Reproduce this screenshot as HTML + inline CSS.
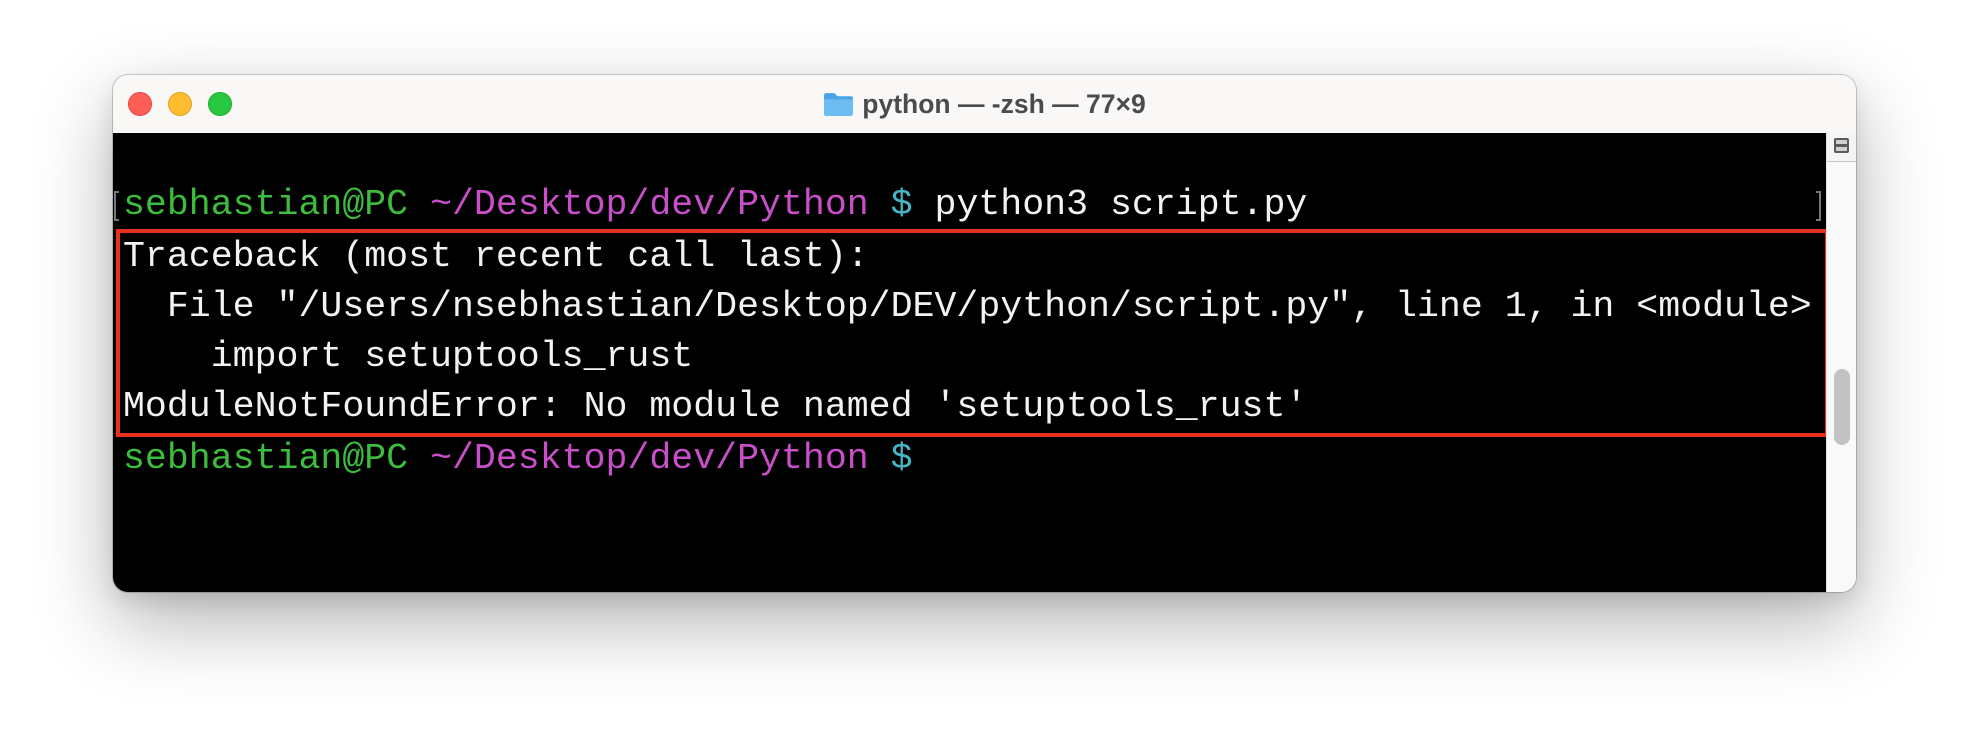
<!DOCTYPE html>
<html><head><meta charset="utf-8"><style>
html,body{margin:0;padding:0;}
body{width:1968px;height:740px;background:#fff;position:relative;overflow:hidden;}
.win{position:absolute;left:113px;top:75px;width:1743px;height:517px;border-radius:15px;background:#faf8f6;
box-shadow:0 30px 80px rgba(0,0,0,0.30),0 8px 20px rgba(0,0,0,0.10),0 0 0 1px rgba(0,0,0,0.18);overflow:hidden;}
.tl{position:absolute;top:17px;width:24px;height:24px;border-radius:50%;}
.term{position:absolute;left:0;top:58px;width:1713px;height:459px;background:#000;}
.sb{position:absolute;left:1713px;top:58px;width:30px;height:459px;background:#f9f9f9;border-left:1px solid #e6e6e6;box-sizing:border-box;}
.line{position:absolute;left:10px;font-family:"Liberation Mono",monospace;font-size:36.55px;line-height:50px;white-space:pre;color:#f2f2f2;}
.g{color:#3dbd3d}.m{color:#c84fc8}.c{color:#45b5c5}
.title{position:absolute;left:0;right:0;top:13px;text-align:center;font-family:"Liberation Sans",sans-serif;font-weight:bold;font-size:26.5px;color:#4b4b4b;line-height:32px;}
</style></head><body>
<div class="win">
  <div class="tl" style="left:15px;background:#fe5f57;border:1px solid #e0443e;box-sizing:border-box"></div>
  <div class="tl" style="left:55px;background:#febc2e;border:1px solid #dea123;box-sizing:border-box"></div>
  <div class="tl" style="left:95px;background:#28c840;border:1px solid #1aab29;box-sizing:border-box"></div>
  <div class="title"><svg width="31" height="25" viewBox="0 0 30 24" style="vertical-align:-4px;margin-right:8px"><path d="M1 3a2 2 0 0 1 2-2h8l3 3h13a2 2 0 0 1 2 2v15a2 2 0 0 1-2 2H3a2 2 0 0 1-2-2z" fill="#4aa3e6"/><path d="M1 7h28v14a2 2 0 0 1-2 2H3a2 2 0 0 1-2-2z" fill="#6dbcf2"/></svg>python — -zsh — 77×9</div>
  <div class="term">
    <div style="position:absolute;left:1px;top:58px;width:5px;height:30px;border:2px solid #777;border-right:none;box-sizing:border-box"></div>
    <div style="position:absolute;left:1703px;top:58px;width:5px;height:30px;border:2px solid #777;border-left:none;box-sizing:border-box"></div>
    <div class="line" style="top:47px"><span class="g">sebhastian@PC</span> <span class="m">~/Desktop/dev/Python</span> <span class="c">$</span> python3 script.py</div>
    <div style="position:absolute;left:3px;top:96px;width:1713px;height:208px;border:4px solid #e8301e;box-sizing:border-box"></div>
    <div class="line" style="top:99px">Traceback (most recent call last):</div>
    <div class="line" style="top:149px">  File "/Users/nsebhastian/Desktop/DEV/python/script.py", line 1, in &lt;module&gt;</div>
    <div class="line" style="top:199px">    import setuptools_rust</div>
    <div class="line" style="top:249px">ModuleNotFoundError: No module named 'setuptools_rust'</div>
    <div class="line" style="top:301px"><span class="g">sebhastian@PC</span> <span class="m">~/Desktop/dev/Python</span> <span class="c">$</span></div>
  </div>
  <div class="sb">
    <div style="position:absolute;left:0;top:0;width:29px;height:28px;border-bottom:1px solid #c8c8c8;background:#f4f4f4"></div>
    <div style="position:absolute;left:7px;top:5px;width:15px;height:15px;background:#5a5a5a;border-radius:2px"></div>
    <div style="position:absolute;left:9px;top:7px;width:11px;height:4px;background:#cfcfcf"></div>
    <div style="position:absolute;left:9px;top:14px;width:11px;height:4px;background:#cfcfcf"></div>
    <div style="position:absolute;left:7px;top:236px;width:16px;height:76px;border-radius:8px;background:#c2c2c2"></div>
  </div>
</div>
</body></html>
